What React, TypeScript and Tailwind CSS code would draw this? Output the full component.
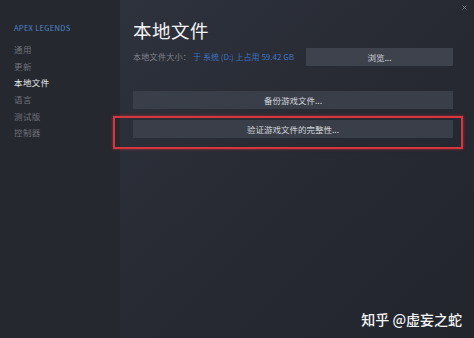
import { X } from 'lucide-react';

const navItems = ['通用', '更新', '本地文件', '语言', '测试版', '控制器'];

export default function App() {
  return (
    <div
      className="relative flex w-[474px] h-[338px] overflow-hidden bg-[#24272e] text-white"
      style={{ fontFamily: '"Noto Sans CJK SC", "Noto Sans", sans-serif' }}
    >
      {/* sidebar */}
      <div className="w-[120px] shrink-0 bg-[#25282f] pl-[14px] pt-[23px]">
        <div className="text-[7.5px] leading-[9px] tracking-[0.3px] text-[#4f86c9]">APEX LEGENDS</div>
        <div className="mt-[9px] flex flex-col">
          {navItems.map((item) => (
            <div
              key={item}
              className={`h-[16.7px] text-[8.5px] leading-[16.7px] tracking-[0.4px] ${
                item === '本地文件' ? 'text-[#e8e9eb]' : 'text-[#6f737b]'
              }`}
            >
              {item}
            </div>
          ))}
        </div>
      </div>

      {/* main panel */}
      <div className="relative flex-1 bg-gradient-to-br from-[#2e323c] via-[#272a33] to-[#22252c] pl-[13px] pr-[21px] pt-[18px]">
        <X className="absolute right-[6px] top-[4px] w-[7px] h-[7px] text-[#8a8e96]" strokeWidth={2.5} />

        <h1 className="text-[18.5px] leading-[24px] tracking-[0.5px] text-[#f2f3f4]">本地文件</h1>

        <div className="mt-[6px] flex items-center h-[18px]">
          <span className="text-[8px] text-[#80848c] tracking-[0.3px]">本地文件大小：</span>
          <span className="ml-[2px] text-[8px] text-[#3f74c4]">于 系统 (D:) 上占用 59.42 GB</span>
          <button className="ml-auto w-[147px] h-[18px] bg-[#3d424d] text-[8.5px] text-[#d4d6da]">
            浏览...
          </button>
        </div>

        <button className="mt-[25px] block w-full h-[18px] bg-[#393e49] text-[8.5px] text-[#d4d6da]">
          备份游戏文件...
        </button>
        <button className="mt-[11px] block w-full h-[18px] bg-[#393e49] text-[8.5px] text-[#d4d6da]">
          验证游戏文件的完整性...
        </button>

        <div className="absolute bottom-[10px] right-[12px] text-[14px] leading-[17px] font-medium text-[#f4f4f4]">
          知乎 @虚妄之蛇
        </div>
      </div>

      {/* highlight box */}
      <div className="absolute left-[113px] top-[116px] w-[350px] h-[33px] border-2 border-[#d8363d] shadow-[0_0_3px_rgba(216,54,61,0.6)]" />
    </div>
  );
}
